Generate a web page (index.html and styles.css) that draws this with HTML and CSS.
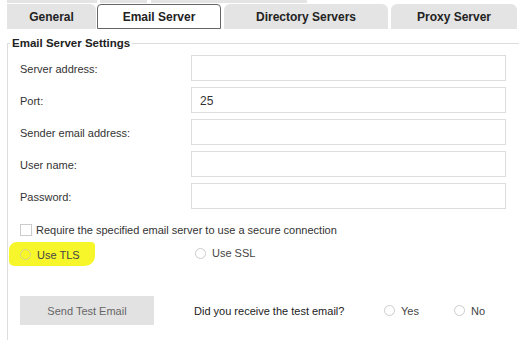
FILE: index.html
```html
<!DOCTYPE html>
<html lang="en">
<head>
    <meta charset="utf-8"/>
    <title>Email Server</title>
    <link rel="stylesheet" href="styles.css">
</head>
<body>
    <div class="strip">
        <span class="seg s1"></span><span class="seg s2"></span><span class="seg s3"></span>
    </div>
    <div class="tabs">
        <div class="tab t-general">General</div>
        <div class="tab t-email active">Email Server</div>
        <div class="tab t-dir">Directory Servers</div>
        <div class="tab t-proxy">Proxy Server</div>
    </div>
    <fieldset class="settings">
        <legend>Email Server Settings</legend>
        <div class="form">
            <label class="lbl">Server address:</label><div class="field"></div>
            <label class="lbl">Port:</label><div class="field">25</div>
            <label class="lbl">Sender email address:</label><div class="field"></div>
            <label class="lbl">User name:</label><div class="field"></div>
            <label class="lbl">Password:</label><div class="field"></div>
        </div>
        <div class="check"><span class="box"></span>Require the specified email server to use a secure connection</div>
        <div class="opts">
            <div class="col1"><span class="opt hl"><span class="radio"></span>Use TLS</span></div>
            <div class="col2"><span class="opt"><span class="radio"></span>Use SSL</span></div>
        </div>
        <div class="test">
            <div class="col1"><div class="btn">Send Test Email</div></div>
            <div class="col2 question">
                <span class="q">Did you receive the test email?</span>
                <span class="opt yes"><span class="radio"></span>Yes</span>
                <span class="opt no"><span class="radio"></span>No</span>
            </div>
        </div>
    </fieldset>
</body>
</html>
```

FILE: styles.css
```css
* {
    box-sizing: border-box;
}
body {
    margin: 0;
    width: 519px;
    height: 340px;
    overflow: hidden;
    background: #fff;
    font-family: "Liberation Sans", Arial, sans-serif;
    font-size: 11px;
    color: #333;
}
.strip {
    display: flex;
    height: 4px;
    padding-left: 7px;
}
.strip .seg {
    background: #e4e4e4;
    height: 3px;
}
.strip .s1 { width: 90px; }
.strip .s2 { width: 47px; margin-left: 3px; }
.strip .s3 { width: 156px; margin-left: 4px; }

.tabs {
    display: flex;
    height: 25px;
    padding-left: 7px;
}
.tab {
    display: flex;
    align-items: center;
    justify-content: center;
    background: #e4e4e4;
    font-weight: bold;
    font-size: 12px;
    color: #222;
    border-radius: 6px 6px 0 0;
}
.t-general {
    width: 89px;
    border-radius: 0 6px 0 0;
}
.t-email {
    width: 124px;
    margin-left: 1px;
}
.tab.active {
    background: #fff;
    border: 1px solid #666;
    border-radius: 4px 4px 0 0;
}
.t-dir {
    width: 164px;
    margin-left: 3px;
}
.t-proxy {
    width: 126px;
    margin-left: 3px;
}

.settings {
    margin: 7px -20px 0 7px;
    padding: 5px 0 0 12px;
    border: 1px solid #ddd;
    height: 320px;
}
.settings legend {
    padding: 0 2px;
    margin-left: -10px;
    font-weight: bold;
    font-size: 11.5px;
    line-height: 14px;
    color: #222;
}
.form {
    display: grid;
    grid-template-columns: 171px 315px;
    row-gap: 6px;
}
.lbl {
    display: flex;
    align-items: center;
    height: 26px;
    padding-top: 2px;
}
.field {
    height: 26px;
    border: 1px solid #ddd;
    padding: 2px 8px 0;
    display: flex;
    align-items: center;
    font-size: 12px;
    color: #333;
}

.check {
    display: flex;
    align-items: center;
    margin-top: 15px;
    height: 12px;
}
.box {
    width: 12px;
    height: 12px;
    border: 1px solid #ccc;
    background: #fff;
    margin-right: 4px;
}

.opts, .test {
    display: grid;
    grid-template-columns: 171px 315px;
    align-items: center;
}
.opts {
    margin-top: 6px;
    height: 24px;
}
.opt {
    display: inline-flex;
    align-items: center;
    color: #444;
}
.radio {
    width: 11px;
    height: 11px;
    border: 1px solid #ccc;
    border-radius: 50%;
    background: #fff;
    margin-right: 6px;
}
.opt.hl {
    background: #f6f62a;
    height: 24px;
    margin-left: -11px;
    padding: 1px 15px 0 11px;
    border-radius: 8px 4px 10px 5px;
}
.opt.hl .radio {
    background: #f6f62a;
    border-color: #d4d48a;
}
.opts .col2 {
    padding-left: 4px;
}

.test {
    margin-top: 30px;
}
.btn {
    width: 134px;
    height: 29px;
    background: #e2e2e2;
    color: #666;
    display: flex;
    align-items: center;
    justify-content: center;
}
.question {
    display: flex;
    align-items: center;
    padding-left: 3px;
}
.q {
    color: #222;
    width: 190px;
}
.yes {
    width: 70px;
}
```
